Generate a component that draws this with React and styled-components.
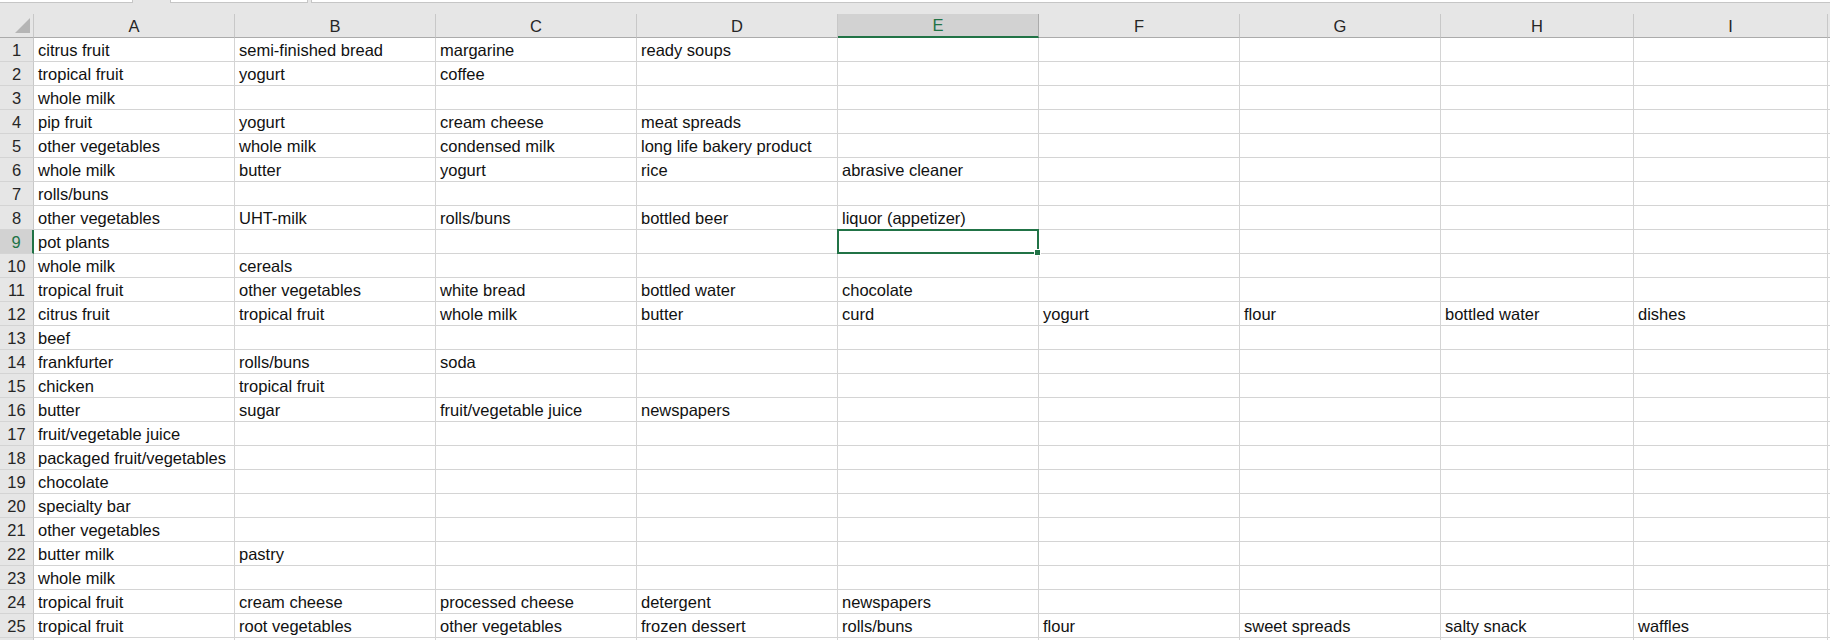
import React from "react";
import styled, { createGlobalStyle } from "styled-components";

const GlobalStyle = createGlobalStyle`
  html, body {
    margin: 0;
    padding: 0;
    overflow: hidden;
    background: #ffffff;
  }
  body {
    font-family: "Liberation Sans", Arial, sans-serif;
  }
`;

const COLUMNS = [
  { id: "A", width: 201 },
  { id: "B", width: 201 },
  { id: "C", width: 201 },
  { id: "D", width: 201 },
  { id: "E", width: 201 },
  { id: "F", width: 201 },
  { id: "G", width: 201 },
  { id: "H", width: 193 },
  { id: "I", width: 194 },
  { id: "J", width: 201 },
];

const ROWS = [
  ["citrus fruit", "semi-finished bread", "margarine", "ready soups"],
  ["tropical fruit", "yogurt", "coffee"],
  ["whole milk"],
  ["pip fruit", "yogurt", "cream cheese", "meat spreads"],
  ["other vegetables", "whole milk", "condensed milk", "long life bakery product"],
  ["whole milk", "butter", "yogurt", "rice", "abrasive cleaner"],
  ["rolls/buns"],
  ["other vegetables", "UHT-milk", "rolls/buns", "bottled beer", "liquor (appetizer)"],
  ["pot plants"],
  ["whole milk", "cereals"],
  ["tropical fruit", "other vegetables", "white bread", "bottled water", "chocolate"],
  ["citrus fruit", "tropical fruit", "whole milk", "butter", "curd", "yogurt", "flour", "bottled water", "dishes"],
  ["beef"],
  ["frankfurter", "rolls/buns", "soda"],
  ["chicken", "tropical fruit"],
  ["butter", "sugar", "fruit/vegetable juice", "newspapers"],
  ["fruit/vegetable juice"],
  ["packaged fruit/vegetables"],
  ["chocolate"],
  ["specialty bar"],
  ["other vegetables"],
  ["butter milk", "pastry"],
  ["whole milk"],
  ["tropical fruit", "cream cheese", "processed cheese", "detergent", "newspapers"],
  ["tropical fruit", "root vegetables", "other vegetables", "frozen dessert", "rolls/buns", "flour", "sweet spreads", "salty snack", "waffles"],
  [],
];

const ACTIVE = { row: 9, col: "E" };
const GREEN = "#217346";

export default function App() {
  return (
    <>
      <GlobalStyle />
      <Window>
        <FormulaStrip>
          <NameBox />
          <StripGap />
          <FxBox />
          <FormulaInput />
        </FormulaStrip>

        <Sheet $cols={COLUMNS.map((c) => `${c.width}px`).join(" ")}>
          <Corner>
            <svg width="16" height="16" viewBox="0 0 16 16">
              <polygon points="15,0 15,15 0,15" fill="#b5b5b5" />
            </svg>
          </Corner>
          {COLUMNS.map((c) => (
            <ColHeader key={c.id} $active={c.id === ACTIVE.col}>
              {c.id}
            </ColHeader>
          ))}

          {ROWS.map((values, r) => {
            const rowNum = r + 1;
            return (
              <React.Fragment key={rowNum}>
                <RowHeader $active={rowNum === ACTIVE.row}>{rowNum}</RowHeader>
                {COLUMNS.map((c, i) => {
                  const isActive = rowNum === ACTIVE.row && c.id === ACTIVE.col;
                  return (
                    <Cell key={c.id} $active={isActive}>
                      {values[i] || ""}
                      {isActive && <FillHandle />}
                    </Cell>
                  );
                })}
              </React.Fragment>
            );
          })}
        </Sheet>
      </Window>
    </>
  );
}

const Window = styled.div`
  width: 1830px;
  height: 640px;
  overflow: hidden;
  background: #e6e6e6;
  display: flex;
  flex-direction: column;
`;

const FormulaStrip = styled.div`
  display: flex;
  height: 3px;
  margin-bottom: 11px;
`;

const StripBox = styled.div`
  height: 2px;
  background: #ffffff;
  border-bottom: 1px solid #c6c6c6;
`;

const NameBox = styled(StripBox)`
  width: 132px;
  border-right: 1px solid #c6c6c6;
`;

const StripGap = styled.div`
  width: 37px;
`;

const FxBox = styled(StripBox)`
  width: 136px;
  border-left: 1px solid #c6c6c6;
  border-right: 1px solid #c6c6c6;
`;

const FormulaInput = styled(StripBox)`
  flex: 1;
  margin-left: 3px;
  border-left: 1px solid #c6c6c6;
`;

const Sheet = styled.div`
  display: grid;
  grid-template-columns: 34px ${(p) => p.$cols};
  grid-auto-rows: 24px;
  font-size: 16.5px;
  line-height: 22px;
  background: #ffffff;
`;

const Corner = styled.div`
  background: #e6e6e6;
  border-right: 1px solid #c8c8c8;
  border-bottom: 1px solid #ababab;
  display: flex;
  align-items: flex-end;
  justify-content: flex-end;
  padding: 0 2px 3px 0;
  box-sizing: border-box;
`;

const ColHeader = styled.div`
  box-sizing: border-box;
  padding-top: 1px;
  text-align: center;
  color: ${(p) => (p.$active ? GREEN : "#262626")};
  background: ${(p) => (p.$active ? "#d2d2d2" : "#e6e6e6")};
  border-right: 1px solid ${(p) => (p.$active ? "#ababab" : "#c8c8c8")};
  border-bottom: ${(p) => (p.$active ? `2px solid ${GREEN}` : "1px solid #ababab")};
  line-height: ${(p) => (p.$active ? "21px" : "22px")};
`;

const RowHeader = styled.div`
  box-sizing: border-box;
  padding-top: 1px;
  text-align: center;
  color: ${(p) => (p.$active ? GREEN : "#262626")};
  background: ${(p) => (p.$active ? "#d2d2d2" : "#e6e6e6")};
  border-right: ${(p) => (p.$active ? `2px solid ${GREEN}` : "1px solid #c8c8c8")};
  border-bottom: 1px solid #d4d4d4;
`;

const Cell = styled.div`
  position: relative;
  box-sizing: border-box;
  padding: 1px 3px 0 4px;
  color: #111111;
  white-space: nowrap;
  border-right: 1px solid #d4d4d4;
  border-bottom: 1px solid #d4d4d4;

  ${(p) =>
    p.$active &&
    `
    &::after {
      content: "";
      position: absolute;
      top: -1px;
      left: -1px;
      right: -1px;
      bottom: -1px;
      border: 2px solid ${GREEN};
      pointer-events: none;
    }
  `}
`;

const FillHandle = styled.span`
  position: absolute;
  right: -3px;
  bottom: -3px;
  width: 5px;
  height: 5px;
  background: ${GREEN};
  border: 1px solid #ffffff;
  z-index: 2;
`;
